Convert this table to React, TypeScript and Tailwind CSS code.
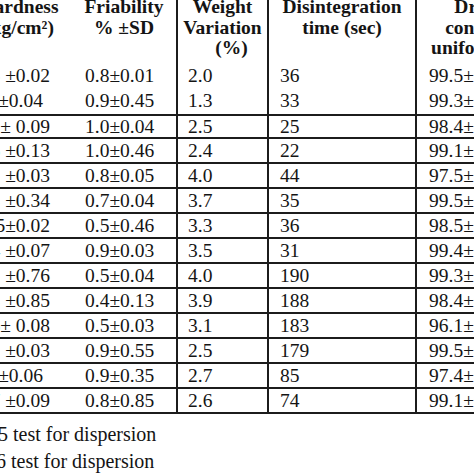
import React from "react";

type Row = { h: string; hp: string; f: string; w: string; d: string; c: string };

const rows: Row[] = [
  { h: "4.5 ±0.02", hp: "pr-[22px]", f: "0.8±0.01", w: "2.0", d: "36", c: "99.5±0.12" },
  { h: "4.8±0.04", hp: "pr-[29px]", f: "0.9±0.45", w: "1.3", d: "33", c: "99.3±0.21" },
  { h: "4.2± 0.09", hp: "pr-[22px]", f: "1.0±0.04", w: "2.5", d: "25", c: "98.4±0.33" },
  { h: "4.6 ±0.13", hp: "pr-[22px]", f: "1.0±0.46", w: "2.4", d: "22", c: "99.1±0.15" },
  { h: "5.1 ±0.03", hp: "pr-[22px]", f: "0.8±0.05", w: "4.0", d: "44", c: "97.5±0.42" },
  { h: "5.3 ±0.34", hp: "pr-[22px]", f: "0.7±0.04", w: "3.7", d: "35", c: "99.5±0.18" },
  { h: "6.5±0.02", hp: "pr-[22px]", f: "0.5±0.46", w: "3.3", d: "36", c: "98.5±0.27" },
  { h: "5.4 ±0.07", hp: "pr-[22px]", f: "0.9±0.03", w: "3.5", d: "31", c: "99.4±0.11" },
  { h: "6.1 ±0.76", hp: "pr-[22px]", f: "0.5±0.04", w: "4.0", d: "190", c: "99.3±0.24" },
  { h: "6.3 ±0.85", hp: "pr-[22px]", f: "0.4±0.13", w: "3.9", d: "188", c: "98.4±0.36" },
  { h: "6.6± 0.08", hp: "pr-[22px]", f: "0.5±0.03", w: "3.1", d: "183", c: "96.1±0.52" },
  { h: "6.2 ±0.03", hp: "pr-[22px]", f: "0.9±0.55", w: "2.5", d: "179", c: "99.5±0.14" },
  { h: "5.9±0.06", hp: "pr-[29px]", f: "0.9±0.35", w: "2.7", d: "85", c: "97.4±0.29" },
  { h: "5.7 ±0.09", hp: "pr-[22px]", f: "0.8±0.85", w: "2.6", d: "74", c: "99.1±0.17" },
];

const rowCls = [
  "h-[25px] leading-[25px]",
  "h-[26px] leading-[26px]",
  "h-[23px] leading-[21px] border-t-2",
  "h-[25px] leading-[23px] border-t-2",
  "h-[25px] leading-[23px] border-t-2",
  "h-[25px] leading-[23px] border-t-2",
  "h-[25px] leading-[23px] border-t-2",
  "h-[25px] leading-[23px] border-t-2",
  "h-[25px] leading-[23px] border-t-2",
  "h-[25px] leading-[23px] border-t-2",
  "h-[25px] leading-[23px] border-t-2",
  "h-[25px] leading-[23px] border-t-2",
  "h-[25px] leading-[23px] border-t-2",
  "h-[27px] leading-[23px] border-t-2 border-b-2",
];

const grid = "grid grid-cols-[106px_104px_91px_148px_120px] border-[#1c1c1c]";

export default function App() {
  return (
    <div className="w-[474px] h-[474px] overflow-hidden bg-white text-[#141414] font-['Liberation_Serif','Times_New_Roman',serif] text-[19.5px]">
      <div className="ml-[-34px] w-[609px]">
        <div className={`${grid} h-[66px] mt-[-3px] leading-[20.5px] font-bold text-center`}>
          <div className="whitespace-nowrap">
            <div>Hardness</div>
            <div>(kg/cm²)</div>
          </div>
          <div className="whitespace-nowrap">
            <div>Friability</div>
            <div>% ±SD</div>
          </div>
          <div className="whitespace-nowrap border-l-2 border-[#1c1c1c]">
            <div>Weight</div>
            <div>Variation</div>
            <div>
              <span className="pl-[18px]">(%)</span>
            </div>
          </div>
          <div className="whitespace-nowrap border-l-2 border-[#1c1c1c]">
            <div>Disintegration</div>
            <div>time (sec)</div>
          </div>
          <div className="whitespace-nowrap border-l-2 border-[#1c1c1c]">
            <div>Drug</div>
            <div>content</div>
            <div>uniformity</div>
          </div>
        </div>
        {rows.map((r, i) => (
          <div key={i} className={`${grid} ${rowCls[i]}`}>
            <div className={`whitespace-nowrap text-right ${r.hp}`}>{r.h}</div>
            <div className="whitespace-nowrap pl-[13px]">{r.f}</div>
            <div className="whitespace-nowrap pl-[10px] border-l-2 border-[#1c1c1c]">{r.w}</div>
            <div className="whitespace-nowrap pl-[11px] border-l-2 border-[#1c1c1c]">{r.d}</div>
            <div className="whitespace-nowrap pl-[12px] border-l-2 border-[#1c1c1c]">{r.c}</div>
          </div>
        ))}
      </div>
      <div className="mt-[7px] text-[20px] leading-[26.5px] whitespace-nowrap">
        <div className="ml-[-12px]">25 test for dispersion</div>
        <div className="ml-[-14px]">26 test for dispersion</div>
      </div>
    </div>
  );
}
